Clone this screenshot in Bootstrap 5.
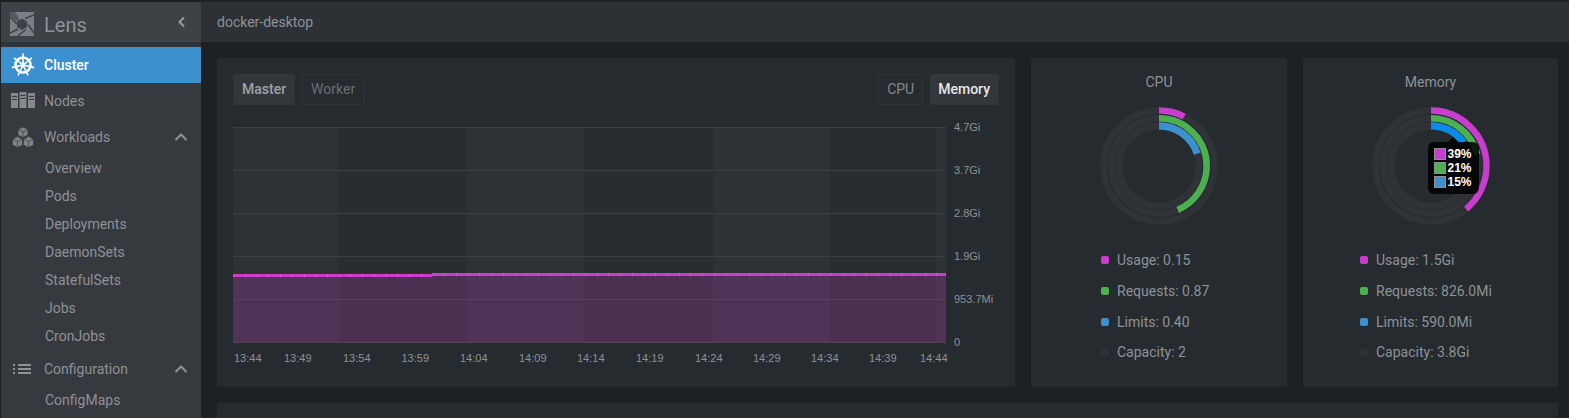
<!DOCTYPE html>
<html lang="en">
<head>
<meta charset="utf-8">
<title>Lens</title>
<link href="https://cdn.jsdelivr.net/npm/bootstrap@5.3.0/dist/css/bootstrap.min.css" rel="stylesheet">
<style>
html,body{height:418px;overflow:hidden}
body{background:#1e2124;font-family:Roboto,sans-serif;font-size:14px;color:#8e9297;padding-top:2px}
.side-pane{width:200px;margin-left:1px;background:#36393e;flex:none;height:416px;overflow:hidden}
.side-top{height:40px;background:#3e4146;padding:0 13px 0 9px}
.side-logo{margin-top:3px}
.side-top .brand{font-size:20px;font-weight:400;color:#8e9297;margin-left:10px;margin-top:6px;line-height:1}
.side-gap{height:5px;background:#303338}
.side-row{height:36px;padding-left:10px;padding-right:13px;color:#8e9297}
.side-row.on{background:#3d90ce;color:#fff;font-weight:500}
.side-ico{width:24px;height:24px;flex:none;margin-right:9px}
.side-sub{height:28px;line-height:28px;padding-left:44px;color:#8e9297}
.side-sub.tight{margin-top:-1px}
.side-row.loose{margin-top:1px}
.main-pane{min-width:0;flex:1}
.top-bar{height:40px;background:#2d3136;padding-left:16px;color:#8e9297}
.cards-area{padding:16px 11px 0 16px}
.tile{background:#262b2f;height:329px}
.tile-chart{width:798px;padding:16px;flex:none}
.tile-ring{width:256px;flex:none}
.tile-ring.narrow{width:255px}
.tile-next{background:#262b2f;height:15px;margin-top:16px}
.btn-pair{gap:7px}
.sel-btn{height:31px;padding:0 8px;line-height:29px;border:1px solid #2f3337;border-radius:3px;color:#6b6e72;font-size:14px}
.sel-btn.mid{color:#83868a}
.sel-btn.cur{background:#33363b;border-color:#33363b;color:#a0a3a7;font-weight:500}
.sel-btn.cur.bright{color:#e8e8e8;padding-left:7px}
.plot{display:block}
.plot text{font-family:"Liberation Sans",sans-serif;font-size:11px;fill:#8e9297}
.ring-title{text-align:center;padding-top:16px;line-height:17px;height:33px;color:#8e9297}
.ring-box{position:relative;width:120px;height:120px;margin:15px auto 0}
.ring-box svg{display:block}
.key-list{margin-top:19px;padding-left:70px;list-style:none;margin-bottom:0}
.tile-ring.narrow .key-list{padding-left:57px}
.key-list li{height:30.8px;line-height:30.8px;color:#8e9297;display:flex;align-items:center}
.key-dot{width:8px;height:8px;border-radius:2px;margin-right:8px;flex:none}
.tip{position:absolute;left:57px;top:36px;width:51px;height:52px;background:rgba(0,0,0,.85);border-radius:6px;padding:5px 0 0 6px;font-family:"Liberation Sans",sans-serif;font-weight:700;font-size:12px;color:#fff}
.tip::before{content:"";position:absolute;left:20px;top:-5px;border:5px solid transparent;border-top:0;border-bottom-color:rgba(0,0,0,.85)}
.tip-row{height:14px;line-height:13px;display:flex;align-items:center}
.tip-sw{width:12px;height:12px;border:1px solid #8f8f8f;margin-right:2px;flex:none}
</style>
</head>
<body class="d-flex">
<aside class="side-pane">
  <div class="side-top d-flex align-items-center">
    <svg class="side-logo" width="24" height="24" viewBox="0 0 24 24"><rect width="24" height="24" fill="#7b7e83"/><g fill="none" stroke="#3e4146" stroke-width="1.400"><path d="M8 8.500L2 0M15 6.500L24 3M18 12.500L24 21M16 17.500L8 24M8 17L0 21M7 12L0 5"/></g><path d="M12 6.500l5 3v5.500l-5 3-5-3V9.500z" fill="#3e4146"/><path d="M0 0h5l4 6-3 3L0 4z" fill="#555860"/></svg>
    <span class="brand flex-grow-1">Lens</span>
    <svg width="12" height="12" viewBox="0 0 12 12"><path d="M8 1.500L3.500 6 8 10.500" fill="none" stroke="#9a9da1" stroke-width="2"/></svg>
  </div>
  <div class="side-gap"></div>
  <div class="side-row on d-flex align-items-center">
    <svg class="side-ico" viewBox="0 0 24 24" fill="none" stroke="#fff"><path d="M12 12V.500M12 12L21 4.800M12 12L23.200 14.600M12 12L17 22.300M12 12L7 22.300M12 12L.800 14.600M12 12L3 4.800" stroke-width="1.600"/><circle cx="12" cy="12" r="7.500" stroke-width="2.600"/><circle cx="12" cy="12" r="2.400" fill="#fff" stroke="none"/></svg>
    <span>Cluster</span>
  </div>
  <div class="side-row d-flex align-items-center">
    <svg class="side-ico" viewBox="0 0 24 24" fill="#85888d"><rect x="0" y="4" width="7" height="15"/><rect x="8.500" y="3" width="7" height="16"/><rect x="17" y="4" width="7" height="15"/><g fill="#36393e"><rect x="1" y="7" width="5" height="1"/><rect x="1" y="10" width="5" height="1"/><rect x="9.500" y="6" width="5" height="1"/><rect x="9.500" y="9" width="5" height="1"/><rect x="18" y="7" width="5" height="1"/><rect x="18" y="10" width="5" height="1"/></g></svg>
    <span>Nodes</span>
  </div>
  <div class="side-row d-flex align-items-center">
    <svg class="side-ico" viewBox="0 0 24 24" fill="#7f8287" stroke="#36393e" stroke-width=".7"><path d="M12 2l5 2.500v5.500L12 12.500 7 10V4.500z"/><path d="M7 4.500l5 2.500 5-2.500M12 7v5.500" fill="none"/><path d="M6.500 11.500l5 2.500v6L6.500 22.500 1.500 20v-6z"/><path d="M1.500 14l5 2.500 5-2.500M6.500 16.500v6" fill="none"/><path d="M17.500 11.500l5 2.500v6l-5 2.500-5-2.500v-6z"/><path d="M12.500 14l5 2.500 5-2.500M17.500 16.500v6" fill="none"/></svg>
    <span class="flex-grow-1">Workloads</span>
    <svg width="14" height="10" viewBox="0 0 14 10"><path d="M1.500 8L7 2.500 12.500 8" fill="none" stroke="#8e9297" stroke-width="2"/></svg>
  </div>
  <div class="side-sub tight">Overview</div>
  <div class="side-sub">Pods</div>
  <div class="side-sub">Deployments</div>
  <div class="side-sub">DaemonSets</div>
  <div class="side-sub">StatefulSets</div>
  <div class="side-sub">Jobs</div>
  <div class="side-sub">CronJobs</div>
  <div class="side-row loose d-flex align-items-center">
    <svg class="side-ico" viewBox="0 0 24 24" fill="#8e9297"><rect x="2" y="7" width="2" height="2"/><rect x="7" y="7" width="13" height="2"/><rect x="2" y="11" width="2" height="2"/><rect x="7" y="11" width="13" height="2"/><rect x="2" y="15" width="2" height="2"/><rect x="7" y="15" width="13" height="2"/></svg>
    <span class="flex-grow-1">Configuration</span>
    <svg width="14" height="10" viewBox="0 0 14 10"><path d="M1.500 8L7 2.500 12.500 8" fill="none" stroke="#8e9297" stroke-width="2"/></svg>
  </div>
  <div class="side-sub tight">ConfigMaps</div>
</aside>
<main class="main-pane">
  <div class="top-bar d-flex align-items-center">docker-desktop</div>
  <div class="cards-area">
    <div class="d-flex gap-3">
      <section class="tile tile-chart">
        <div class="d-flex justify-content-between">
          <div class="d-flex btn-pair"><span class="sel-btn cur">Master</span><span class="sel-btn">Worker</span></div>
          <div class="d-flex btn-pair"><span class="sel-btn mid">CPU</span><span class="sel-btn cur bright">Memory</span></div>
        </div>
        <svg class="plot" id="plot" width="766" height="266"></svg>
      </section>
      <section class="tile tile-ring">
        <div class="ring-title">CPU</div>
        <div class="ring-box"><svg id="ringA" width="120" height="120" viewBox="0 0 120 120"></svg></div>
        <ul class="key-list">
          <li><i class="key-dot" style="background:#c93dce"></i>Usage: 0.15</li>
          <li><i class="key-dot" style="background:#4caf50"></i>Requests: 0.87</li>
          <li><i class="key-dot" style="background:#3d90ce"></i>Limits: 0.40</li>
          <li><i class="key-dot" style="background:#2d3136"></i>Capacity: 2</li>
        </ul>
      </section>
      <section class="tile tile-ring narrow">
        <div class="ring-title">Memory</div>
        <div class="ring-box"><svg id="ringB" width="120" height="120" viewBox="0 0 120 120"></svg>
          <div class="tip">
            <div class="tip-row"><i class="tip-sw" style="background:#c93dce"></i>39%</div>
            <div class="tip-row"><i class="tip-sw" style="background:#4caf50"></i>21%</div>
            <div class="tip-row"><i class="tip-sw" style="background:#3d90ce"></i>15%</div>
          </div>
        </div>
        <ul class="key-list">
          <li><i class="key-dot" style="background:#c93dce"></i>Usage: 1.5Gi</li>
          <li><i class="key-dot" style="background:#4caf50"></i>Requests: 826.0Mi</li>
          <li><i class="key-dot" style="background:#3d90ce"></i>Limits: 590.0Mi</li>
          <li><i class="key-dot" style="background:#2d3136"></i>Capacity: 3.8Gi</li>
        </ul>
      </section>
    </div>
    <div class="tile-next"></div>
  </div>
</main>
<script>
(function(){
var NS='http://www.w3.org/2000/svg';
function el(p,n,a,t){var e=document.createElementNS(NS,n);for(var k in a)e.setAttribute(k,a[k]);if(t)e.textContent=t;p.appendChild(e);return e;}
var s=document.getElementById('plot');
var ox=233,oy=105;
function X(x){return x-ox}function Y(y){return y-oy}
var bands=[[233,339],[467,584],[713,830],[936,946]];
el(s,'rect',{x:0,y:Y(127),width:713,height:216,fill:'#282d30'});
bands.forEach(function(b){el(s,'rect',{x:X(b[0]),y:Y(127),width:b[1]-b[0],height:216,fill:'#2e3236'});});
[127,170,213,256,299,342].forEach(function(y){el(s,'rect',{x:0,y:Y(y),width:713,height:1,fill:'#3c4044'});});
el(s,'path',{d:'M0 '+Y(275.5)+'H'+X(432)+'V'+Y(274.5)+'H713V'+Y(343)+'H0Z',fill:'#c93dce','fill-opacity':'.22'});
el(s,'path',{d:'M0 '+Y(275.5)+'H'+X(432)+'M'+X(432)+' '+Y(274.5)+'H713',stroke:'#c93dce','stroke-width':3,fill:'none'});
for(var x=245;x<946;x+=11.72){var up=x>=432;el(s,'rect',{x:Math.round(X(x)),y:Y(up?273:274),width:1,height:3,fill:'#fff','fill-opacity':'.16'});}
[['4.7Gi',127],['3.7Gi',170],['2.8Gi',213],['1.9Gi',256],['953.7Mi',299],['0',342]].forEach(function(l){el(s,'text',{x:X(954),y:Y(l[1])+4},l[0]);});
[['13:44',234],['13:49',284],['13:54',343],['13:59',401.5],['14:04',460],['14:09',519],['14:14',577],['14:19',636],['14:24',695],['14:29',753],['14:34',811],['14:39',869],['14:44',920]].forEach(function(l){el(s,'text',{x:X(l[1]),y:Y(362)},l[0]);});
function arc(p,r,w,frac,col){var c=2*Math.PI*r;el(p,'circle',{cx:60,cy:60,r:r,fill:'none',stroke:col,'stroke-width':w,'stroke-dasharray':(c*frac)+' '+c,transform:'rotate(-90 60 60)'});}
function ring(id,vals){var p=document.getElementById(id);
 var rs=[[55.5,6.4],[47.7,6.6],[40.2,7.2]];
 rs.forEach(function(r,i){arc(p,r[0],r[1],1,'#2f3337');arc(p,r[0],r[1],vals[i][0],vals[i][1]);});}
ring('ringA',[[.075,'#c93dce'],[.435,'#4caf50'],[.2,'#3d90ce']]);
ring('ringB',[[.39,'#c93dce'],[.21,'#4caf50'],[.15,'#0d8ae8']]);
})();
</script>
</body>
</html>
